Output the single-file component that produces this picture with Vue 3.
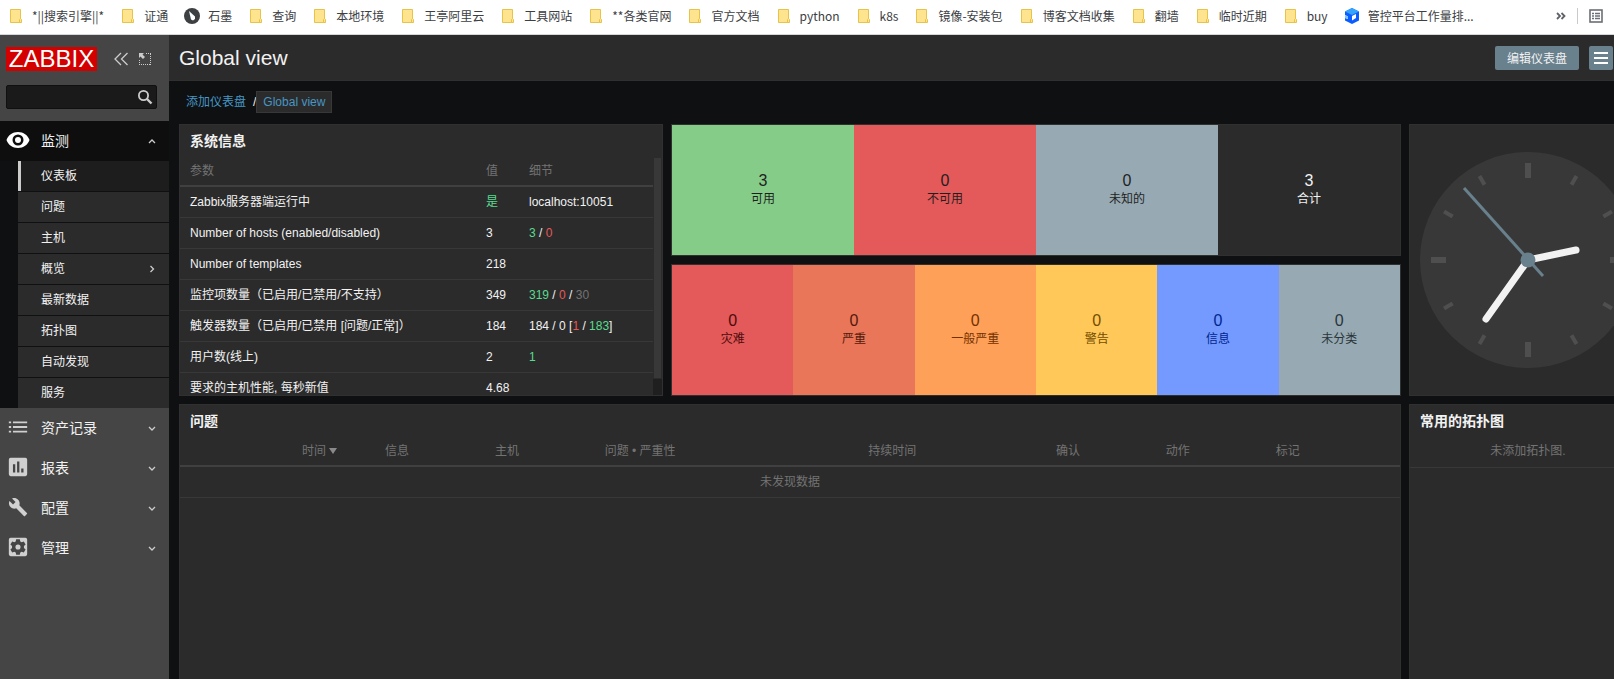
<template>
  <div class="page">
    <nav class="bookmarks" aria-label="书签栏">
      <div class="bookmark-list">
        <a v-for="item in bookmarks" :key="item.name" class="bookmark" href="#">
          <svg v-if="item.icon === 'shimo'" class="bookmark-icon" viewBox="0 0 16 16">
            <circle cx="8" cy="8" r="8" fill="#3c4043" />
            <path d="M5 3l6 5.500v2.500l-2 1.500-2-1z" fill="#fff" />
          </svg>
          <svg v-else-if="item.icon === 'cube'" class="bookmark-icon" viewBox="0 0 16 16">
            <path d="M8 0l7 3.500v9L8 16l-7-3.500V10l3 1V8.500L1 7V3.500z" fill="#0b5cff" />
            <path d="M8 0l7 3.500L8 7 1 3.500z" fill="#35a4ff" />
            <path d="M1 7l3 1.500V11l-3-1z" fill="#7cc4ff" />
            <path d="M8 8l4-2v4l-4 2.500z" fill="#fff" />
          </svg>
          <svg v-else class="bookmark-icon" viewBox="0 0 16 16">
            <path d="M2.500 1.500h10v13h-10z" fill="#ffe48f" stroke="#e8c34a" />
            <path d="M11.500 14.500v-3l1-1 1 1v3z" fill="#ffe48f" stroke="#e8c34a" />
          </svg>
          <span>{{ item.name }}</span>
        </a>
      </div>
      <div class="bookmark-tail">
        <button class="plain-button more" type="button" aria-label="更多书签">
          <svg width="10" height="8" viewBox="0 0 10 8">
            <path d="M1 1l3 3-3 3M5.500 1l3 3-3 3" fill="none" stroke="#5f6368" stroke-width="1.800" />
          </svg>
        </button>
        <span class="divider"></span>
        <button class="plain-button" type="button" aria-label="阅读清单">
          <svg width="14" height="14" viewBox="0 0 14 14">
            <rect x="1" y="1" width="12" height="12" fill="none" stroke="#6b6f74" stroke-width="1.600" />
            <path d="M3 4.500h2M6 4.500h5M3 7h2M6 7h5M3 9.500h2M6 9.500h5" stroke="#6b6f74" stroke-width="1.400" />
          </svg>
        </button>
      </div>
    </nav>

    <div class="app">
      <aside class="sidebar">
        <div class="brand">
          <a class="logo" href="#">ZABBIX</a>
          <button class="plain-button collapse" type="button" aria-label="收起侧栏">
            <svg width="14" height="14" viewBox="0 0 14 14">
              <path d="M7 1L1 7l6 6M13.500 1l-6 6 6 6" fill="none" stroke="#ccc" stroke-width="1.300" />
            </svg>
          </button>
          <button class="plain-button" type="button" aria-label="隐藏侧栏">
            <svg width="12" height="12" viewBox="0 0 12 12">
              <path d="M7 .5h5M11.500 1v11M0 11.500h12M.5 7v5" fill="none" stroke="#ccc" stroke-dasharray="1 1" />
              <path d="M0 0h5L3.500 1.500 6 4 4 6 1.500 3.500 0 5z" fill="#ccc" />
            </svg>
          </button>
        </div>
        <form class="search" @submit.prevent>
          <input v-model="keyword" type="text" aria-label="搜索" />
          <button class="plain-button" type="submit" aria-label="搜索">
            <svg width="16" height="16" viewBox="0 0 16 16">
              <circle cx="6.500" cy="6.500" r="4.600" fill="none" stroke="#ccc" stroke-width="1.800" />
              <path d="M10 10l4.500 4.500" stroke="#ccc" stroke-width="2.400" />
            </svg>
          </button>
        </form>

        <nav class="menu">
          <template v-for="item in menu" :key="item.name">
            <a class="menu-item" :class="{ active: item.children }" href="#">
              <svg class="menu-icon" viewBox="0 0 24 24"><path :d="item.icon" fill-rule="evenodd" /></svg>
              <span class="menu-name">{{ item.name }}</span>
              <svg class="arrow" viewBox="0 0 8 8">
                <path :d="item.children ? 'M1 6l3-3 3 3' : 'M1 3l3 3 3-3'" />
              </svg>
            </a>
            <ul v-if="item.children" class="submenu">
              <li v-for="sub in item.children" :key="sub">
                <a href="#" :class="{ selected: sub === current }" @click.prevent="current = sub">
                  <span>{{ sub }}</span>
                  <svg v-if="sub === '概览'" class="arrow" viewBox="0 0 8 8"><path d="M2.500 1l3 3-3 3" /></svg>
                </a>
              </li>
            </ul>
          </template>
        </nav>
      </aside>

      <main class="main">
        <header class="header">
          <h1>Global view</h1>
          <div class="actions">
            <button class="btn" type="button">编辑仪表盘</button>
            <button class="btn btn-menu" type="button" aria-label="操作">
              <svg width="14" height="14" viewBox="0 0 14 14">
                <path d="M0 2h14M0 7h14M0 12h14" stroke="#fff" stroke-width="2" />
              </svg>
            </button>
          </div>
        </header>

        <nav class="crumbs">
          <a href="#">添加仪表盘</a>
          <span>/</span>
          <a class="crumb-current" href="#">Global view</a>
        </nav>

        <div class="dashboard">
          <section class="widget sysinfo">
            <h4>系统信息</h4>
            <div class="scroll">
              <table>
                <colgroup>
                  <col class="w-param" />
                  <col class="w-value" />
                  <col />
                </colgroup>
                <thead>
                  <tr><th>参数</th><th>值</th><th>细节</th></tr>
                </thead>
                <tbody>
                  <tr v-for="row in info" :key="row.name">
                    <td>{{ row.name }}</td>
                    <td :class="row.cls">{{ row.value }}</td>
                    <td><span v-for="(part, i) in row.detail" :key="i" :class="part[1]">{{ part[0] }}</span></td>
                  </tr>
                </tbody>
              </table>
              <div class="scrollbar"><div class="thumb"></div></div>
            </div>
          </section>

          <div class="totals">
            <section v-for="(group, g) in totals" :key="g" class="widget tiles">
              <div v-for="tile in group" :key="tile.name" class="tile" :class="tile.cls">
                <span class="count">{{ tile.count }}</span>
                <span>{{ tile.name }}</span>
              </div>
            </section>
          </div>

          <section class="widget clock">
            <svg viewBox="-108 -108 216 216" role="img" aria-label="时钟">
              <circle r="108" fill="#383838" />
              <path
                v-for="n in 12"
                :key="n"
                :d="n % 3 ? 'M0-97v10' : 'M0-97v15'"
                :transform="`rotate(${n * 30})`"
                :stroke-width="n % 3 ? 4 : 6"
                stroke="#4f4f4f"
              />
              <path d="M0 0L48-10M0 0l-42 59" stroke="#f2f2f2" stroke-width="7" stroke-linecap="round" />
              <path d="M-64-72L15 16" stroke="#69808d" stroke-width="3" />
              <circle r="7.500" fill="#69808d" />
            </svg>
          </section>

          <section class="widget problems">
            <h4>问题</h4>
            <table>
              <colgroup>
                <col v-for="col in problemCols" :key="col.cls" :class="col.cls" />
              </colgroup>
              <thead>
                <tr>
                  <th v-for="col in problemCols" :key="col.cls">
                    {{ col.name }}<span v-if="col.sort" class="sort"></span>
                  </th>
                </tr>
              </thead>
              <tbody>
                <tr><td class="empty" :colspan="problemCols.length">未发现数据</td></tr>
              </tbody>
            </table>
          </section>

          <section class="widget maps">
            <h4>常用的拓扑图</h4>
            <p class="empty">未添加拓扑图.</p>
          </section>
        </div>
      </main>
    </div>
  </div>
</template>

<script setup>
import { ref } from 'vue'

const keyword = ref('')
const current = ref('仪表板')

const bookmarks = [
  { name: '*||搜索引擎||*' },
  { name: '证通' },
  { name: '石墨', icon: 'shimo' },
  { name: '查询' },
  { name: '本地环境' },
  { name: '王亭阿里云' },
  { name: '工具网站' },
  { name: '**各类官网' },
  { name: '官方文档' },
  { name: 'python' },
  { name: 'k8s' },
  { name: '镜像-安装包' },
  { name: '博客文档收集' },
  { name: '翻墙' },
  { name: '临时近期' },
  { name: 'buy' },
  { name: '管控平台工作量排...', icon: 'cube' }
]

const menu = [
  {
    name: '监测',
    icon: 'M12 4C6.500 4 2.200 7.200 .5 12c1.700 4.800 6 8 11.500 8s9.800-3.200 11.500-8C21.800 7.200 17.500 4 12 4zm0 13.500a5.500 5.500 0 1 1 0-11 5.500 5.500 0 0 1 0 11zm0-8.500a3 3 0 1 0 0 6 3 3 0 0 0 0-6z',
    children: ['仪表板', '问题', '主机', '概览', '最新数据', '拓扑图', '自动发现', '服务']
  },
  { name: '资产记录', icon: 'M2 6h2.500v2H2zM6.500 6H22v2H6.500zM2 11h2.500v2H2zM6.500 11H22v2H6.500zM2 16h2.500v2H2zM6.500 16H22v2H6.500z' },
  { name: '报表', icon: 'M4 2h16a2 2 0 0 1 2 2v16a2 2 0 0 1-2 2H4a2 2 0 0 1-2-2V4a2 2 0 0 1 2-2zM6.500 9v9h2.500V9zM11 6v12h2.500V6zM15.500 13.500V18H18v-4.500z' },
  { name: '配置', icon: 'M21.700 18.500l-8.300-8.300c.8-2.100.4-4.500-1.300-6.200C10.300 2.200 7.600 1.800 5.500 2.800L9.300 6.600 6.600 9.300 2.700 5.500C1.600 7.600 2.100 10.300 3.900 12.100c1.700 1.700 4.100 2.100 6.200 1.300l8.300 8.300c.4.4.9.4 1.300 0l2-2c.4-.3.4-.9 0-1.200z' },
  { name: '管理', icon: 'M4 2h16a2 2 0 0 1 2 2v16a2 2 0 0 1-2 2H4a2 2 0 0 1-2-2V4a2 2 0 0 1 2-2zM10 3.500l-.5 2.400-1.500.9-2.300-.8-2 3.400 1.800 1.600v2l-1.800 1.600 2 3.400 2.300-.8 1.500.9.500 2.400h4l.5-2.400 1.500-.9 2.300.8 2-3.400-1.800-1.600v-2l1.800-1.600-2-3.400-2.300.8-1.500-.9-.5-2.400zM12 9.200a2.800 2.800 0 1 1 0 5.600 2.800 2.800 0 0 1 0-5.600z' }
]

const info = [
  { name: 'Zabbix服务器端运行中', value: '是', cls: 'green', detail: [['localhost:10051']] },
  { name: 'Number of hosts (enabled/disabled)', value: '3', detail: [['3', 'green'], [' / '], ['0', 'red']] },
  { name: 'Number of templates', value: '218', detail: [] },
  { name: '监控项数量（已启用/已禁用/不支持）', value: '349', detail: [['319', 'green'], [' / '], ['0', 'red'], [' / '], ['30', 'grey']] },
  { name: '触发器数量（已启用/已禁用 [问题/正常]）', value: '184', detail: [['184 / 0 ['], ['1', 'red'], [' / '], ['183', 'green'], [']']] },
  { name: '用户数(线上)', value: '2', detail: [['1', 'green']] },
  { name: '要求的主机性能, 每秒新值', value: '4.68', detail: [] }
]

const totals = [
  [
    { name: '可用', count: 3, cls: 'available' },
    { name: '不可用', count: 0, cls: 'unavailable' },
    { name: '未知的', count: 0, cls: 'unknown' },
    { name: '合计', count: 3, cls: 'total' }
  ],
  [
    { name: '灾难', count: 0, cls: 'disaster' },
    { name: '严重', count: 0, cls: 'high' },
    { name: '一般严重', count: 0, cls: 'average' },
    { name: '警告', count: 0, cls: 'warning' },
    { name: '信息', count: 0, cls: 'information' },
    { name: '未分类', count: 0, cls: 'unclassified' }
  ]
]

const problemCols = [
  { name: '时间', cls: 'c-time', sort: true },
  { name: '信息', cls: 'c-info' },
  { name: '主机', cls: 'c-host' },
  { name: '问题 • 严重性', cls: 'c-problem' },
  { name: '持续时间', cls: 'c-duration' },
  { name: '确认', cls: 'c-ack' },
  { name: '动作', cls: 'c-action' },
  { name: '标记', cls: 'c-tag' }
]
</script>

<style>
body {
  background: #0e1012;
}
</style>

<style scoped>
* {
  box-sizing: border-box;
}

.page {
  display: flex;
  flex-direction: column;
  height: 100vh;
  overflow: hidden;
  background: #0e1012;
  color: #f2f2f2;
  font-family: "Liberation Sans", "Noto Sans CJK SC", sans-serif;
  font-size: 12px;
  line-height: 18px;
}

a {
  color: #4796c4;
  text-decoration: none;
}

svg {
  display: block;
}

.plain-button {
  padding: 0;
  border: 0;
  background: none;
  cursor: pointer;
}

/* 书签栏 */
.bookmarks {
  display: flex;
  flex: none;
  align-items: center;
  justify-content: space-between;
  height: 35px;
  padding: 0 11px 2px 8px;
  border-bottom: 1px solid #d5d7da;
  background: #fff;
  font-family: "Noto Sans CJK SC", sans-serif;
}

.bookmark-list {
  display: flex;
  gap: 16px;
}

.bookmark {
  display: flex;
  align-items: center;
  gap: 8px;
  color: #3c4043;
  white-space: nowrap;
}

.bookmark-icon {
  width: 16px;
  height: 16px;
}

.bookmark-tail {
  display: flex;
  align-items: center;
  gap: 11px;
}

.divider {
  width: 1px;
  height: 16px;
  background: #c8cacd;
}

.app {
  display: flex;
  flex: 1;
  min-height: 0;
}

/* 侧栏 */
.sidebar {
  flex: none;
  width: 169px;
  background: #454545;
}

.brand {
  display: flex;
  align-items: center;
  height: 48px;
  padding: 0 6px;
}

.logo {
  width: 91px;
  height: 24px;
  background: #d40000;
  color: #fff;
  font-size: 24px;
  line-height: 24px;
  text-align: center;
}

.collapse {
  margin: 0 11px 0 17px;
}

.search {
  display: flex;
  align-items: center;
  height: 24px;
  margin: 2px 12px 12px 6px;
  padding-right: 3px;
  border: 1px solid #0e1012;
  border-radius: 2px;
  background: #1a1a1a;
}

.search input {
  flex: 1;
  min-width: 0;
  height: 22px;
  border: 0;
  outline: none;
  background: none;
  color: #f2f2f2;
}

.menu-item {
  display: flex;
  align-items: center;
  height: 40px;
  padding: 0 13px 0 7px;
  color: #f2f2f2;
  font-size: 14px;
}

.menu-item.active {
  padding-left: 6px;
  background: #0e0e0e;
}

.menu-icon {
  width: 22px;
  height: 22px;
  margin: 0 12px 2px 0;
  fill: #d0d0d0;
}

.active .menu-icon {
  width: 24px;
  height: 24px;
  margin-right: 11px;
  fill: #fff;
}

.menu-name {
  flex: 1;
}

.arrow {
  width: 8px;
  height: 8px;
  fill: none;
  stroke: #ccc;
  stroke-width: 1.3;
}

.submenu {
  margin: 0;
  padding: 0 0 0 18px;
  background: #0e1012;
  list-style: none;
}

.submenu li + li {
  border-top: 1px solid #0e1012;
}

.submenu a {
  display: flex;
  align-items: center;
  justify-content: space-between;
  height: 30px;
  padding: 0 13px 0 20px;
  border-left: 3px solid transparent;
  background: #2b2b2b;
  color: #f2f2f2;
}

.submenu a.selected {
  border-left-color: #ccc;
  background: #1d1d1d;
}

/* 主区域 */
.main {
  display: flex;
  flex: 1;
  flex-direction: column;
  min-width: 0;
  overflow: hidden;
}

.header {
  display: flex;
  flex: none;
  align-items: center;
  justify-content: space-between;
  height: 46px;
  padding: 0 1px 0 10px;
  border-bottom: 1px solid #303030;
  background: #2b2b2b;
}

h1 {
  margin: 0;
  font-size: 21px;
  font-weight: normal;
  line-height: 24px;
}

.actions {
  display: flex;
  gap: 10px;
}

.btn {
  height: 24px;
  padding: 0 12px;
  border: 0;
  border-radius: 2px;
  background: #69808d;
  color: #f2f2f2;
  font-family: inherit;
  font-size: 12px;
  cursor: pointer;
}

.btn-menu {
  padding: 0 5px;
}

.crumbs {
  display: flex;
  flex: none;
  align-items: center;
  height: 41px;
  padding: 0 17px;
}

.crumbs span {
  margin-left: 7px;
}

.crumb-current {
  padding: 0 6px;
  border: 1px solid #383838;
  background: #2b2b2b;
  line-height: 20px;
}

.dashboard {
  display: grid;
  flex: 1;
  grid-template-columns: repeat(6, minmax(0, 1fr));
  grid-template-rows: 272px minmax(0, 1fr);
  gap: 8px;
  /* 右侧部件超出可视区域 */
  margin: 2px -33px -1px 10px;
  min-height: 0;
}

.widget {
  overflow: hidden;
  border: 1px solid #303030;
  background: #2b2b2b;
}

.sysinfo {
  display: flex;
  flex-direction: column;
  grid-column: span 2;
}

h4 {
  flex: none;
  margin: 0;
  padding: 0 10px;
  font-size: 14px;
  line-height: 33px;
}

.scroll {
  display: flex;
  flex: 1;
  align-items: flex-start;
  min-height: 0;
  overflow: hidden;
}

table {
  width: 100%;
  border-collapse: separate;
  border-spacing: 0;
  table-layout: fixed;
}

th,
td {
  padding: 0 5px;
  text-align: left;
  white-space: nowrap;
}

th {
  height: 29px;
  padding-bottom: 1px;
  border-bottom: 2px solid #404040;
  color: #737373;
  font-weight: normal;
}

td {
  height: 31px;
  border-bottom: 1px solid #383838;
}

td span {
  white-space: pre;
}

.sysinfo th:first-child,
.sysinfo td:first-child {
  padding-left: 10px;
}

.w-param {
  width: 301px;
}

.w-value {
  width: 43px;
}

.scrollbar {
  flex: none;
  align-self: stretch;
  width: 9px;
  padding: 0 1px;
  background: #1f1f1f;
}

.thumb {
  height: 93%;
  box-shadow: 0 0 0 1px #2b2b2b;
  background: #383838;
}

.green {
  color: #59db8f;
}

.red {
  color: #e45959;
}

.grey {
  color: #737373;
}

.totals {
  display: grid;
  grid-column: span 3;
  grid-template-rows: 1fr 1fr;
  gap: 8px;
}

.tiles {
  display: flex;
}

.tile {
  display: flex;
  flex: 1;
  flex-direction: column;
  align-items: center;
  justify-content: center;
}

.count {
  font-size: 16px;
}

.available {
  background: #86cc89;
  color: #1f1f1f;
}

.unavailable {
  background: #e45959;
  color: #1f1f1f;
}

.unknown {
  background: #97aab3;
  color: #1f1f1f;
}

.disaster {
  background: #e45959;
  color: #4b0c0c;
}

.high {
  background: #e97659;
  color: #52190b;
}

.average {
  background: #ffa059;
  color: #733100;
}

.warning {
  background: #ffc859;
  color: #734d00;
}

.information {
  background: #7499ff;
  color: #00268e;
}

.unclassified {
  background: #97aab3;
  color: #2a353a;
}

.clock {
  display: flex;
  align-items: center;
  justify-content: center;
}

.clock svg {
  width: 216px;
  height: 216px;
}

.problems {
  grid-column: span 5;
}

.c-time {
  width: 16.4%;
}

.c-info,
.c-host,
.c-action {
  width: 9%;
}

.c-problem {
  width: 21.6%;
}

.c-duration {
  width: 15.4%;
}

.c-ack {
  width: 9%;
}

.problems th:first-child {
  padding-right: 43px;
  text-align: right;
}

.sort {
  display: inline-block;
  margin: 0 0 1px 3px;
  border-top: 6px solid #8a8a8a;
  border-right: 4px solid transparent;
  border-left: 4px solid transparent;
}

.empty {
  color: #737373;
  text-align: center;
}

.maps .empty {
  margin: 0;
  padding: 4px 0 7px;
  border-bottom: 1px solid #383838;
}
</style>
